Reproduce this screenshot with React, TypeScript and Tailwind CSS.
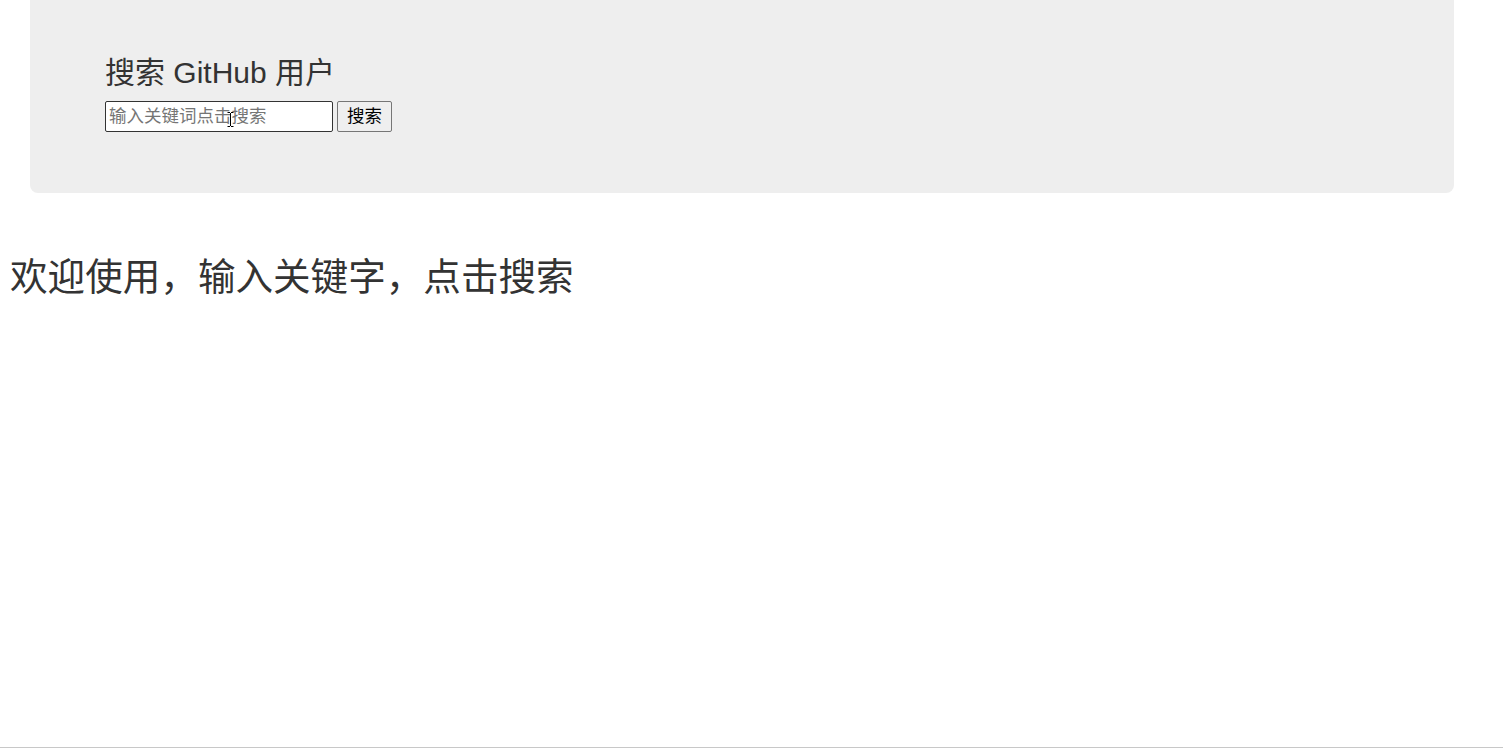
import React from "react";

const font = '"Liberation Sans", Arial, "Noto Sans CJK SC", sans-serif';

export default function App() {
  return (
    <div
      className="relative h-[748px] overflow-hidden border-b border-[#c8c8c8] bg-white text-[#333]"
      style={{ fontFamily: font }}
    >
      <div className="ml-[30px] h-[193px] w-[1424px] rounded-b-[8px] bg-[#eeeeee] pl-[75px] pt-[56px]">
        <h3 className="m-0 text-[30px] font-normal leading-[33px]">搜索 GitHub 用户</h3>
        <div className="mt-[12px] flex items-center gap-[4px]">
          <input
            type="text"
            placeholder="输入关键词点击搜索"
            className="h-[31px] w-[228px] rounded-[2px] border border-[#333] bg-white px-[3px] text-[17.5px] text-black outline-none placeholder:text-[#757575]"
            style={{ fontFamily: font }}
          />
          <button
            className="h-[31px] w-[55px] rounded-[2px] border border-[#767676] bg-[#efefef] text-[17.5px] text-black"
            style={{ fontFamily: font }}
          >
            搜索
          </button>
        </div>
      </div>
      <h2 className="m-0 ml-[10px] mt-[64px] text-[37.6px] font-normal leading-[41px]">
        欢迎使用，输入关键字，点击搜索
      </h2>
      <svg
        className="pointer-events-none absolute left-[227px] top-[112px]"
        width="7"
        height="15"
        viewBox="0 0 7 15"
      >
        <path d="M0.5 0.5h2.5M4 0.5h2.5M3.5 1v13M0.5 14.5h2.5M4 14.5h2.5" stroke="#000" strokeWidth="1" fill="none" />
      </svg>
    </div>
  );
}
